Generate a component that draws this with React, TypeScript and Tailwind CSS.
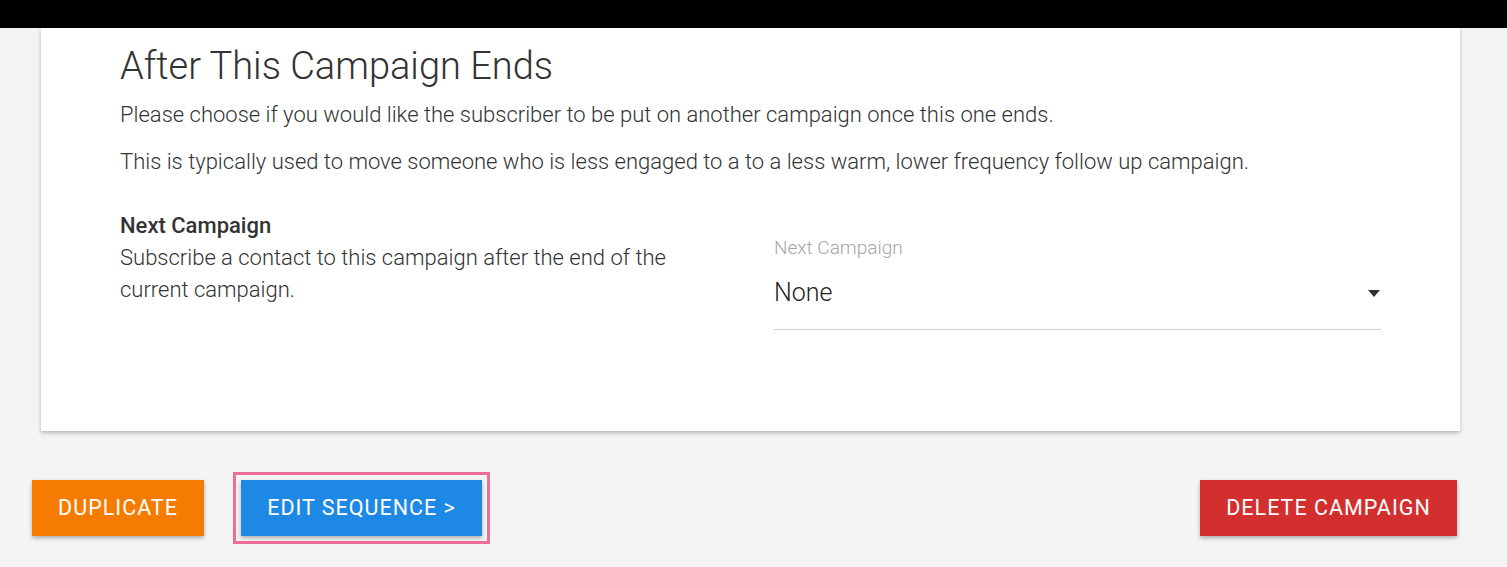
import { useState } from 'react';

export default function App() {
  const [nextCampaign] = useState('None');

  const font = { fontFamily: 'Roboto, "Liberation Sans", sans-serif' };

  return (
    <div className="min-h-[567px] bg-[#f4f4f4] text-[#333]" style={font}>
      {/* Top bar */}
      <div className="h-[28px] bg-black" />

      {/* Card */}
      <div className="ml-[41px] w-[1419px] bg-white shadow-[0_2px_4px_rgba(0,0,0,0.25)] pl-[79px] pr-[79px] pt-[17px] pb-[101px]">
        <h2 className="text-[38px] leading-[43px] font-light text-[#333]">After This Campaign Ends</h2>
        <p className="mt-[13px] text-[22px] leading-[28px] font-light text-[#333]">
          Please choose if you would like the subscriber to be put on another campaign once this one ends.
        </p>
        <p className="mt-[19px] text-[22px] leading-[28px] font-light text-[#333]">
          This is typically used to move someone who is less engaged to a to a less warm, lower frequency follow up campaign.
        </p>

        <div className="mt-[34px] flex">
          <div className="w-[580px]">
            <div className="text-[22px] leading-[32px] font-medium text-[#333]">Next Campaign</div>
            <div className="text-[22px] leading-[32px] font-light text-[#333]">
              Subscribe a contact to this campaign after the end of the current campaign.
            </div>
          </div>

          <div className="ml-[74px] w-[607px] pt-[26px]">
            <div className="text-[19px] leading-[24px] font-light text-[#a6a6a6]">Next Campaign</div>
            <div className="mt-[17px] flex items-center justify-between border-b border-[#cfcfcf] pb-[20px]">
              <span className="text-[25px] leading-[32px] font-light text-[#222]">{nextCampaign}</span>
              <svg width="12" height="7" viewBox="0 0 12 7" className="mr-[1px]">
                <path d="M0 0 L12 0 L6 7 Z" fill="#333" />
              </svg>
            </div>
          </div>
        </div>
      </div>

      {/* Actions */}
      <div className="mt-[49px] flex items-center pl-[32px] pr-[50px]">
        <button className="h-[56px] w-[172px] bg-[#f57c00] text-white text-[21.5px] tracking-[1px] uppercase shadow-[0_2px_4px_rgba(0,0,0,0.3)]">
          Duplicate
        </button>
        <button className="ml-[37px] h-[56px] w-[241px] bg-[#1e88e5] text-white text-[21.5px] tracking-[1px] uppercase shadow-[0_2px_4px_rgba(0,0,0,0.3)] outline-[3px] outline-solid outline-[#ef6e97] outline-offset-[5px]">
          Edit Sequence &gt;
        </button>
        <button className="ml-auto h-[56px] w-[257px] bg-[#d32f2f] text-white text-[21.5px] tracking-[1px] uppercase shadow-[0_2px_4px_rgba(0,0,0,0.3)]">
          Delete Campaign
        </button>
      </div>
    </div>
  );
}
